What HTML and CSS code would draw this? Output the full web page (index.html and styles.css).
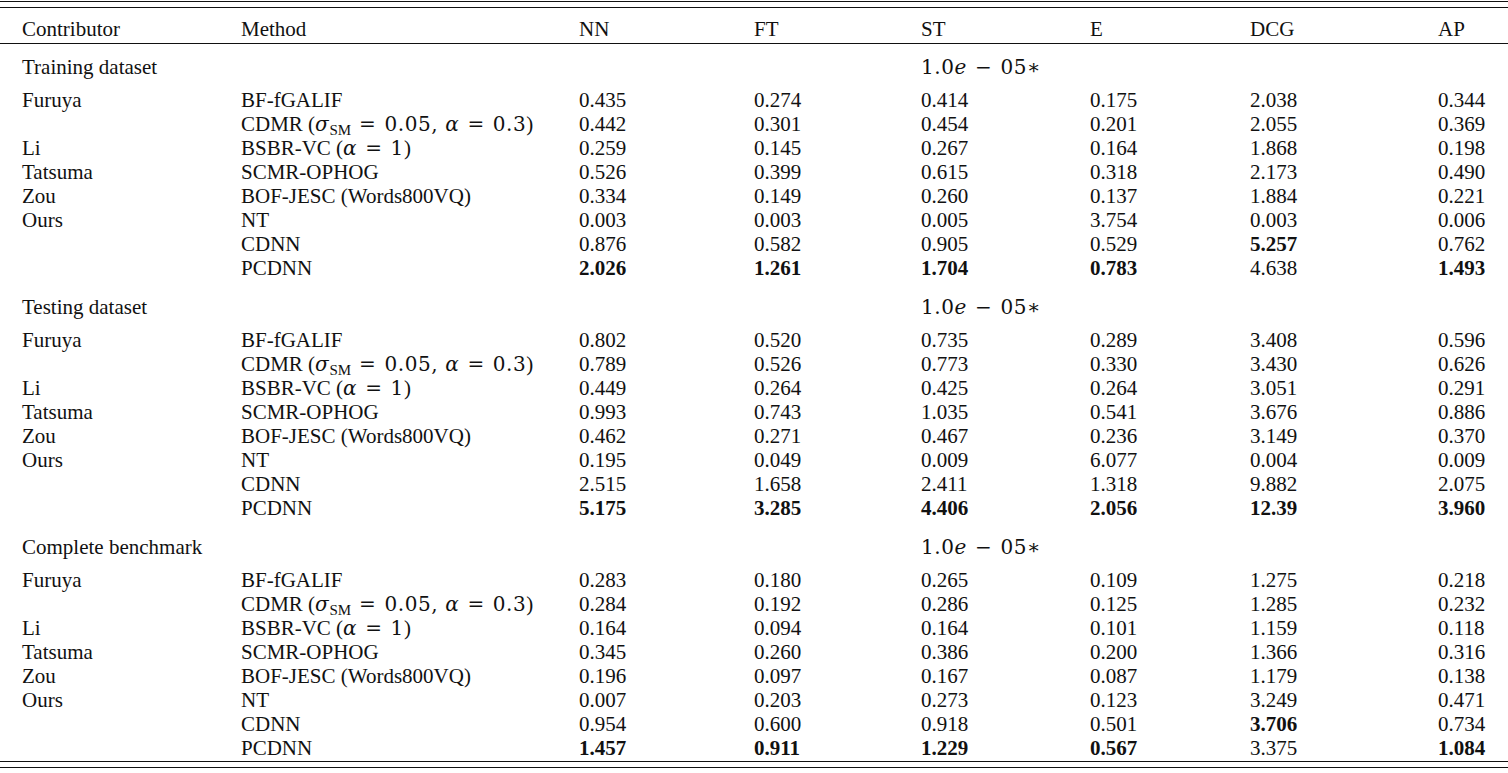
FILE: index.html
```html
<!DOCTYPE html>
<html>
<head>
<meta charset="utf-8">
<link rel="stylesheet" href="styles.css">
</head>
<body>
<div class="rule-double top"></div>
<table class="results">
  <colgroup>
    <col class="c-contrib"><col class="c-method"><col class="c-nn"><col class="c-ft"><col class="c-st"><col class="c-e"><col class="c-dcg"><col class="c-ap">
  </colgroup>
  <thead>
    <tr><th class="first">Contributor</th><th>Method</th><th>NN</th><th>FT</th><th>ST</th><th>E</th><th>DCG</th><th>AP</th></tr>
  </thead>
  <tbody>
    <tr class="section s1"><td class="first">Training dataset</td><td></td><td></td><td></td><td><span class="math">1.0<i>e</i><span class="op">−</span>05∗</span></td><td></td><td></td><td></td></tr>
    <tr class="row r-first"><td class="first">Furuya</td><td>BF-fGALIF</td><td>0.435</td><td>0.274</td><td>0.414</td><td>0.175</td><td>2.038</td><td>0.344</td></tr>
    <tr class="row"><td class="first"></td><td>CDMR (<span class="math"><i>σ</i><sub>SM</sub><span class="op">=</span>0.05, <i>α</i><span class="op">=</span>0.3</span>)</td><td>0.442</td><td>0.301</td><td>0.454</td><td>0.201</td><td>2.055</td><td>0.369</td></tr>
    <tr class="row"><td class="first">Li</td><td>BSBR-VC (<span class="math"><i>α</i><span class="op">=</span>1</span>)</td><td>0.259</td><td>0.145</td><td>0.267</td><td>0.164</td><td>1.868</td><td>0.198</td></tr>
    <tr class="row"><td class="first">Tatsuma</td><td>SCMR-OPHOG</td><td>0.526</td><td>0.399</td><td>0.615</td><td>0.318</td><td>2.173</td><td>0.490</td></tr>
    <tr class="row"><td class="first">Zou</td><td>BOF-JESC (Words800VQ)</td><td>0.334</td><td>0.149</td><td>0.260</td><td>0.137</td><td>1.884</td><td>0.221</td></tr>
    <tr class="row"><td class="first">Ours</td><td>NT</td><td>0.003</td><td>0.003</td><td>0.005</td><td>3.754</td><td>0.003</td><td>0.006</td></tr>
    <tr class="row"><td class="first"></td><td>CDNN</td><td>0.876</td><td>0.582</td><td>0.905</td><td>0.529</td><td class="best">5.257</td><td>0.762</td></tr>
    <tr class="row"><td class="first"></td><td>PCDNN</td><td class="best">2.026</td><td class="best">1.261</td><td class="best">1.704</td><td class="best">0.783</td><td>4.638</td><td class="best">1.493</td></tr>

    <tr class="section"><td class="first">Testing dataset</td><td></td><td></td><td></td><td><span class="math">1.0<i>e</i><span class="op">−</span>05∗</span></td><td></td><td></td><td></td></tr>
    <tr class="row r-first"><td class="first">Furuya</td><td>BF-fGALIF</td><td>0.802</td><td>0.520</td><td>0.735</td><td>0.289</td><td>3.408</td><td>0.596</td></tr>
    <tr class="row"><td class="first"></td><td>CDMR (<span class="math"><i>σ</i><sub>SM</sub><span class="op">=</span>0.05, <i>α</i><span class="op">=</span>0.3</span>)</td><td>0.789</td><td>0.526</td><td>0.773</td><td>0.330</td><td>3.430</td><td>0.626</td></tr>
    <tr class="row"><td class="first">Li</td><td>BSBR-VC (<span class="math"><i>α</i><span class="op">=</span>1</span>)</td><td>0.449</td><td>0.264</td><td>0.425</td><td>0.264</td><td>3.051</td><td>0.291</td></tr>
    <tr class="row"><td class="first">Tatsuma</td><td>SCMR-OPHOG</td><td>0.993</td><td>0.743</td><td>1.035</td><td>0.541</td><td>3.676</td><td>0.886</td></tr>
    <tr class="row"><td class="first">Zou</td><td>BOF-JESC (Words800VQ)</td><td>0.462</td><td>0.271</td><td>0.467</td><td>0.236</td><td>3.149</td><td>0.370</td></tr>
    <tr class="row"><td class="first">Ours</td><td>NT</td><td>0.195</td><td>0.049</td><td>0.009</td><td>6.077</td><td>0.004</td><td>0.009</td></tr>
    <tr class="row"><td class="first"></td><td>CDNN</td><td>2.515</td><td>1.658</td><td>2.411</td><td>1.318</td><td>9.882</td><td>2.075</td></tr>
    <tr class="row"><td class="first"></td><td>PCDNN</td><td class="best">5.175</td><td class="best">3.285</td><td class="best">4.406</td><td class="best">2.056</td><td class="best">12.39</td><td class="best">3.960</td></tr>

    <tr class="section"><td class="first">Complete benchmark</td><td></td><td></td><td></td><td><span class="math">1.0<i>e</i><span class="op">−</span>05∗</span></td><td></td><td></td><td></td></tr>
    <tr class="row r-first"><td class="first">Furuya</td><td>BF-fGALIF</td><td>0.283</td><td>0.180</td><td>0.265</td><td>0.109</td><td>1.275</td><td>0.218</td></tr>
    <tr class="row"><td class="first"></td><td>CDMR (<span class="math"><i>σ</i><sub>SM</sub><span class="op">=</span>0.05, <i>α</i><span class="op">=</span>0.3</span>)</td><td>0.284</td><td>0.192</td><td>0.286</td><td>0.125</td><td>1.285</td><td>0.232</td></tr>
    <tr class="row"><td class="first">Li</td><td>BSBR-VC (<span class="math"><i>α</i><span class="op">=</span>1</span>)</td><td>0.164</td><td>0.094</td><td>0.164</td><td>0.101</td><td>1.159</td><td>0.118</td></tr>
    <tr class="row"><td class="first">Tatsuma</td><td>SCMR-OPHOG</td><td>0.345</td><td>0.260</td><td>0.386</td><td>0.200</td><td>1.366</td><td>0.316</td></tr>
    <tr class="row"><td class="first">Zou</td><td>BOF-JESC (Words800VQ)</td><td>0.196</td><td>0.097</td><td>0.167</td><td>0.087</td><td>1.179</td><td>0.138</td></tr>
    <tr class="row"><td class="first">Ours</td><td>NT</td><td>0.007</td><td>0.203</td><td>0.273</td><td>0.123</td><td>3.249</td><td>0.471</td></tr>
    <tr class="row"><td class="first"></td><td>CDNN</td><td>0.954</td><td>0.600</td><td>0.918</td><td>0.501</td><td class="best">3.706</td><td>0.734</td></tr>
    <tr class="row"><td class="first"></td><td>PCDNN</td><td class="best">1.457</td><td class="best">0.911</td><td class="best">1.229</td><td class="best">0.567</td><td>3.375</td><td class="best">1.084</td></tr>
  </tbody>
</table>
<div class="rule-double bottom"></div>
</body>
</html>
```
FILE: styles.css
```css
html, body {
  margin: 0;
  padding: 0;
  background: #ffffff;
}

body {
  width: 1508px;
  color: #111111;
  font-family: "Liberation Serif", "Times New Roman", serif;
  font-size: 21px;
}

.rule-double {
  width: 1508px;
  height: 5px;
  border-top: 1px solid #111111;
  border-bottom: 1px solid #111111;
}

.rule-double.top {
  margin-top: 1px;
}

.rule-double.bottom {
  margin-top: 1px;
}

.results {
  width: 1508px;
  table-layout: fixed;
  border-collapse: separate;
  border-spacing: 0;
}

.c-contrib { width: 241px; }
.c-method { width: 338px; }
.c-nn { width: 175px; }
.c-ft { width: 167px; }
.c-st { width: 169px; }
.c-e { width: 160px; }
.c-dcg { width: 188px; }
.c-ap { width: 70px; }

.results th,
.results td {
  padding: 0;
  text-align: left;
  vertical-align: top;
  font-weight: normal;
  line-height: 24px;
  height: 24px;
  white-space: nowrap;
  overflow: visible;
}

.results th {
  padding-top: 9px;
  padding-bottom: 2px;
  border-bottom: 1px solid #111111;
}

.results .first {
  padding-left: 22px;
}

.results tr.section td {
  padding-top: 15px;
  padding-bottom: 9px;
}

.results tr.section.s1 td {
  padding-top: 11px;
}

.results td.best {
  font-weight: bold;
}

.math {
  font-family: "DejaVu Serif", "Liberation Serif", serif;
  font-size: 20px;
  line-height: 0;
  letter-spacing: 0.6px;
}

.math i {
  font-style: italic;
}

.math sub {
  font-family: "Liberation Serif", serif;
  font-size: 15px;
  line-height: 0;
  vertical-align: -4px;
  letter-spacing: 0;
}

.math .op {
  margin: 0 8px;
}
```
